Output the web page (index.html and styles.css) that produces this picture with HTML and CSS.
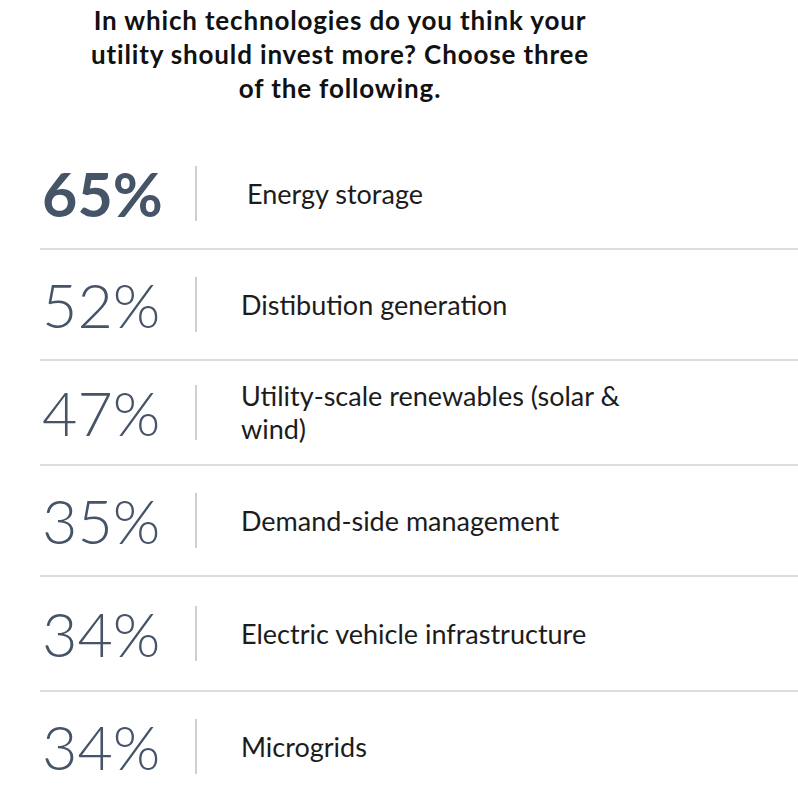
FILE: index.html
```html
<!DOCTYPE html>
<html lang="en">
<head>
<meta charset="utf-8">
<title>Technologies to invest in</title>
<link rel="stylesheet" href="styles.css">
</head>
<body>
<main class="survey">
  <h1 class="question">In which technologies do you think your utility should invest more? Choose three of the following.</h1>
  <ul class="results">
    <li class="row row--lead">
      <span class="pct pct--bold">65%</span>
      <span class="divider"></span>
      <span class="label label--lead">Energy storage</span>
    </li>
    <li class="row">
      <span class="pct">52%</span>
      <span class="divider"></span>
      <span class="label">Distibution generation</span>
    </li>
    <li class="row row--tight">
      <span class="pct">47%</span>
      <span class="divider"></span>
      <span class="label">Utility-scale renewables (solar &amp; wind)</span>
    </li>
    <li class="row">
      <span class="pct">35%</span>
      <span class="divider"></span>
      <span class="label">Demand-side management</span>
    </li>
    <li class="row row--loose">
      <span class="pct">34%</span>
      <span class="divider"></span>
      <span class="label">Electric vehicle infrastructure</span>
    </li>
    <li class="row row--last">
      <span class="pct">34%</span>
      <span class="divider"></span>
      <span class="label">Microgrids</span>
    </li>
  </ul>
</main>
</body>
</html>
```
FILE: styles.css
```css
html, body {
  margin: 0;
  padding: 0;
  background: #ffffff;
}

body {
  font-family: "Lato", "Liberation Sans", sans-serif;
  color: #1c1c1c;
  overflow: hidden;
}

.survey {
  padding-top: 3px;
}

.question {
  width: 512px;
  margin: 0 0 0 84px;
  font-size: 26px;
  line-height: 34px;
  font-weight: 700;
  letter-spacing: 0.85px;
  text-align: center;
  color: #111111;
}

.results {
  list-style: none;
  margin: 34px 0 0 40px;
  padding: 0;
}

.row {
  display: flex;
  align-items: center;
  padding: 27px 0;
  border-bottom: 2px solid #dddddd;
}

.row--tight {
  padding: 18px 0 19px;
}

.row--loose {
  padding: 29px 0;
}

.row--last {
  border-bottom: none;
}

.pct {
  width: 155px;
  flex: none;
  padding-left: 2px;
  box-sizing: border-box;
  font-size: 61px;
  line-height: 55px;
  font-weight: 300;
  color: #465468;
}

.pct--bold {
  font-weight: 700;
}

.divider {
  flex: none;
  width: 2px;
  height: 55px;
  background: #cfcfcf;
}

.label {
  margin-left: 44px;
  max-width: 400px;
  font-size: 27px;
  line-height: 33px;
  font-weight: 400;
  color: #1c1c1c;
}

.label--lead {
  margin-left: 50px;
}
```
